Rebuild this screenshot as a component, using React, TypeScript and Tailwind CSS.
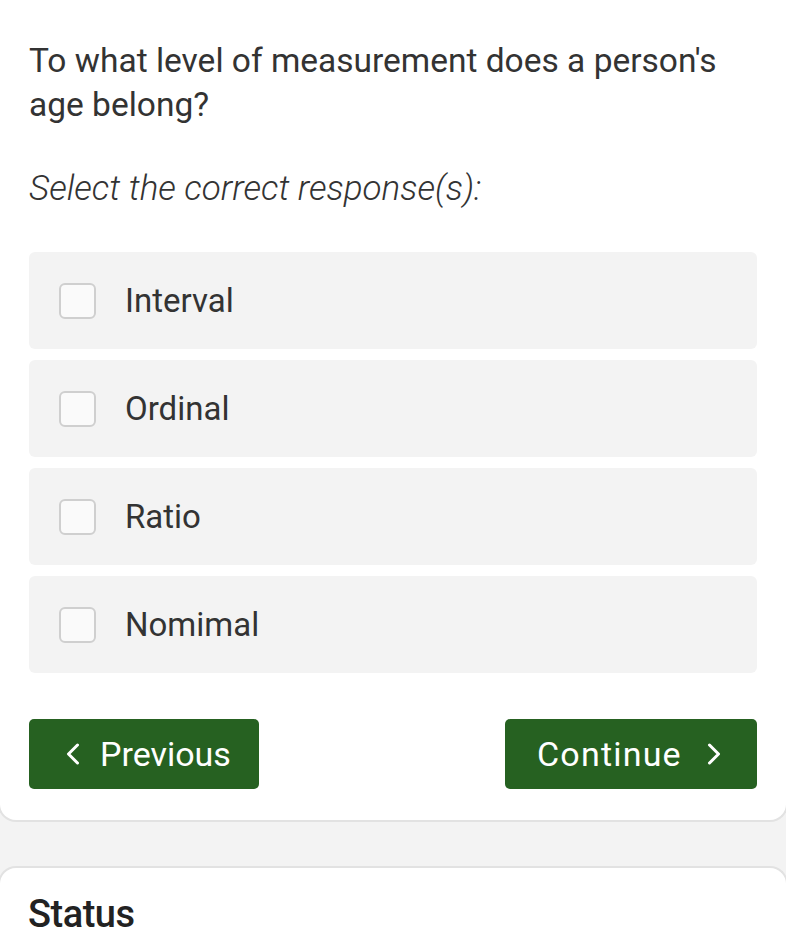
import { ChevronLeft, ChevronRight } from 'lucide-react';

export default function App() {
  const options = ['Interval', 'Ordinal', 'Ratio', 'Nomimal'];

  return (
    <div className="h-[933px] bg-[#f3f3f3] font-['Roboto',sans-serif] text-[#333] overflow-hidden">
      {/* Question card */}
      <div className="bg-white border-b-2 border-x-2 border-[#e2e2e2] rounded-b-[18px] -mx-[2px] px-[29px] pt-[39px] pb-[31px]">
        <h1 className="text-[33.5px] leading-[44px] font-normal">
          To what level of measurement does a person's age belong?
        </h1>
        <p className="mt-[40px] text-[35px] leading-[44px] italic font-light">
          Select the correct response(s):
        </p>

        {/* Options */}
        <div className="mt-[41px] flex flex-col gap-[11px]">
          {options.map((opt) => (
            <label
              key={opt}
              className="h-[97px] flex items-center bg-[#f3f3f3] rounded-[6px] pl-[30px]"
            >
              <span className="w-[37px] h-[36px] rounded-[6px] border-2 border-[#cfcfcf] bg-[#fafafa]" />
              <span className="ml-[29px] text-[33px]">{opt}</span>
            </label>
          ))}
        </div>

        {/* Nav buttons */}
        <div className="mt-[46px] flex justify-between">
          <button className="w-[230px] h-[70px] bg-[#266121] rounded-[5px] flex items-center pl-[26px] text-white text-[34px]">
            <ChevronLeft size={36} strokeWidth={2} />
            <span className="ml-[9px]">Previous</span>
          </button>
          <button className="w-[252px] h-[70px] bg-[#266121] rounded-[5px] flex items-center pl-[32px] text-white text-[34px] tracking-[1.2px]">
            <span>Continue</span>
            <ChevronRight size={36} strokeWidth={2} className="ml-[14px]" />
          </button>
        </div>
      </div>

      {/* Status card */}
      <div className="mt-[44px] bg-white border-t-2 border-x-2 border-[#e2e2e2] rounded-t-[18px] -mx-[2px] px-[28px] pt-[28px] h-[120px]">
        <h2 className="text-[38px] leading-[36px] font-medium text-[#222] tracking-[-0.5px]">Status</h2>
      </div>
    </div>
  );
}
